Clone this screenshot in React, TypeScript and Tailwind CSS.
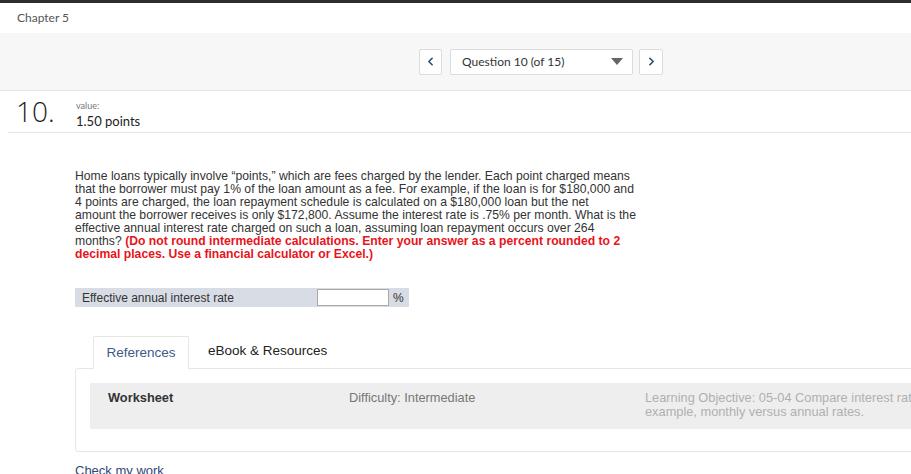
import { ChevronLeft, ChevronRight } from "lucide-react";

const sans = { fontFamily: "Lato, 'Open Sans', sans-serif" };
const arial = { fontFamily: "'Liberation Sans', Arial, sans-serif" };

const QuestionNav = () => {
  return (
    <div className="flex h-[58px] items-center justify-center border-b border-[#e6e6e6] bg-[#f7f7f7] pl-[171px]">
      <button className="flex h-[26px] w-[23px] items-center justify-center rounded-[2px] border border-[#dcdcdc] bg-white text-[#2b4a7a]">
        <ChevronLeft className="size-[13px]" strokeWidth={3} />
      </button>
      <div className="ml-[8px] flex h-[26px] w-[183px] items-center justify-between rounded-[2px] border border-[#dcdcdc] bg-white pr-[9px] pl-[11px] text-[12px] text-[#333]">
        <span>Question 10 (of 15)</span>
        <span className="h-0 w-0 border-x-[6px] border-t-[7px] border-x-transparent border-t-[#666]" />
      </div>
      <button className="ml-[6px] flex h-[26px] w-[24px] items-center justify-center rounded-[2px] border border-[#dcdcdc] bg-white text-[#2b4a7a]">
        <ChevronRight className="size-[13px]" strokeWidth={3} />
      </button>
    </div>
  );
};

const QuestionHeader = () => {
  return (
    <div className="ml-[8px] flex h-[42px] items-start border-b border-[#e6e6e6]">
      <div
        className="mt-[5px] ml-[8px] w-[60px] text-[28px] leading-[30px] font-light text-[#222]"
        style={{ fontFamily: "'Open Sans', Lato, sans-serif" }}
      >
        10.
      </div>
      <div className="mt-[10px]">
        <div className="text-[9px] leading-[10px] text-[#777]">value:</div>
        <div className="mt-[3px] text-[13px] leading-[14px] text-[#222]">
          1.50 points
        </div>
      </div>
    </div>
  );
};

const AnswerRow = () => {
  return (
    <div
      className="mt-[27px] flex h-[19px] w-[334px] items-center bg-[#d8dce5] text-[12px] text-[#333]"
      style={arial}
    >
      <span className="w-[242px] pl-[7px]">Effective annual interest rate</span>
      <input
        className="h-[17px] w-[72px] border border-[#a9a9a9] bg-white outline-none"
        type="text"
      />
      <span className="ml-[4px]">%</span>
    </div>
  );
};

const References = () => {
  return (
    <div className="mt-[28px] w-[900px]" style={arial}>
      <div className="flex items-end pl-[18px]">
        <div className="relative z-10 -mb-px flex h-[33px] w-[96px] items-center justify-center rounded-t-[2px] border border-b-0 border-[#e6e6e6] bg-white text-[13.5px] text-[#3d5a85]">
          References
        </div>
        <div className="flex h-[33px] items-center pl-[19px] text-[13.5px] text-[#222]">
          eBook &amp; Resources
        </div>
      </div>
      <div className="h-[84px] rounded-[3px] border border-[#e6e6e6] bg-white pt-[14px] pl-[14px]">
        <div className="flex h-[46px] bg-[#eeeeee] pt-[8px] text-[12.8px] leading-[14px]">
          <div className="w-[259px] shrink-0 pl-[18px] font-bold text-[#333]">Worksheet</div>
          <div className="w-[296px] shrink-0 text-[#777]">Difficulty: Intermediate</div>
          <div className="whitespace-nowrap text-[#b0b0b0]">
            Learning Objective: 05-04 Compare interest rates quoted over different time intervals—for
            <br />
            example, monthly versus annual rates.
          </div>
        </div>
      </div>
    </div>
  );
};

export default function App() {
  return (
    <div className="h-[474px] w-[911px] overflow-hidden bg-white" style={sans}>
      <div className="h-[3px] bg-[#2d2d2d]" />
      <div className="flex h-[30px] items-center pl-[17px] text-[12px] text-[#555]">
        Chapter 5
      </div>
      <QuestionNav />
      <QuestionHeader />

      <div className="pl-[75px]">
        <p
          className="mt-[37px] text-[12.2px] leading-[13px] whitespace-nowrap text-[#333]"
          style={arial}
        >
          Home loans typically involve “points,” which are fees charged by the lender. Each point charged means
          <br />
          that the borrower must pay 1% of the loan amount as a fee. For example, if the loan is for $180,000 and
          <br />
          4 points are charged, the loan repayment schedule is calculated on a $180,000 loan but the net
          <br />
          amount the borrower receives is only $172,800. Assume the interest rate is .75% per month. What is the
          <br />
          effective annual interest rate charged on such a loan, assuming loan repayment occurs over 264
          <br />
          months?{" "}
          <span className="font-bold text-[#e8141b]">
            (Do not round intermediate calculations. Enter your answer as a percent rounded to 2
            <br />
            decimal places. Use a financial calculator or Excel.)
          </span>
        </p>

        <AnswerRow />
        <References />

        <a className="mt-[9px] block text-[13px] text-[#2d4a78]" style={arial}>
          Check my work
        </a>
      </div>
    </div>
  );
}
